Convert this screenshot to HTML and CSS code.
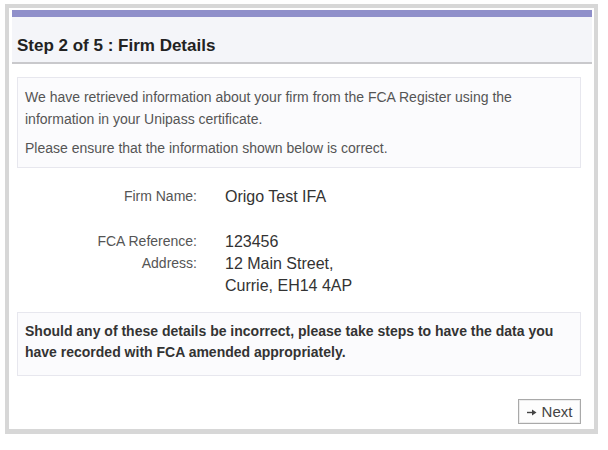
FILE: index.html
```html
<!DOCTYPE html>
<html lang="en">
<head>
    <meta charset="UTF-8">
    <meta name="viewport" content="width=device-width, initial-scale=1.0">
    <title>Firm Details</title>
    <link rel="stylesheet" href="styles.css">
</head>
<body>
    <div class="frame">
        <div class="panel">
            <div class="topbar"></div>
            <h1 class="step-title">Step 2 of 5 : Firm Details</h1>

            <div class="content">
                <div class="info-box">
                    <p>We have retrieved information about your firm from the FCA Register using the information in your Unipass certificate.</p>
                    <p>Please ensure that the information shown below is correct.</p>
                </div>

                <!-- firm details from register -->
                <div class="details">
                    <div class="label">Firm Name:</div>
                    <div class="value">Origo Test IFA</div>

                    <div class="label gap">FCA Reference:</div>
                    <div class="value gap">123456</div>

                    <div class="label">Address:</div>
                    <div class="value">12 Main Street,<br>Currie, EH14 4AP</div>
                </div>

                <div class="notice">
                    Should any of these details be incorrect, please take steps to have the data you have recorded with FCA amended appropriately.
                </div>

                <div class="actions">
                    <button id="next" class="btn">
                        <svg class="arrow" width="10" height="7" viewBox="0 0 10 7">
                            <line x1="0" y1="3.5" x2="6" y2="3.5" stroke="#444" stroke-width="1.4"/>
                            <polygon points="5,0.5 9.5,3.5 5,6.5" fill="#444"/>
                        </svg>
                        Next
                    </button>
                </div>
            </div>
        </div>
    </div>
</body>
</html>
```

FILE: styles.css
```css
body {
    margin: 0;
    font-family: "Liberation Sans", Arial, sans-serif;
    background: #ffffff;
}

.frame {
    width: 585px;
    margin: 4px 0 0 5px;
    border: 4px solid #d7d7d7;
    border-bottom-width: 5px;
    background: #ffffff;
}

.panel {
    padding: 2px 2px 5px 3px;
}

.topbar {
    height: 7px;
    background-color: #8f8fca;
}

.step-title {
    margin: 0;
    padding: 0 0 0 5px;
    height: 45px;
    line-height: 58px;
    font-size: 17px;
    font-weight: bold;
    color: #222;
    background-color: #f4f5f9;
    border-bottom: 2px solid #c9c9cc;
}

.content {
    padding: 13px 11px 0 5px;
}

.info-box {
    border: 1px solid #e7e7ee;
    background-color: #fbfbfd;
    padding: 8px 8px 8px 7px;
    font-size: 14px;
    line-height: 22px;
    color: #555;
}

.info-box p {
    margin: 0;
}

.info-box p + p {
    margin-top: 7px;
}

.details {
    display: grid;
    grid-template-columns: 180px 1fr;
    column-gap: 28px;
    margin-top: 18px;
    align-items: start;
}

.label {
    text-align: right;
    font-size: 14px;
    line-height: 20px;
    color: #555;
}

.value {
    font-size: 16px;
    line-height: 22px;
    color: #333;
}

.gap {
    margin-top: 23px;
}

.notice {
    margin-top: 15px;
    border: 1px solid #e7e7ee;
    background-color: #fbfbfd;
    padding: 8px 8px 12px 7px;
    font-size: 14px;
    font-weight: bold;
    line-height: 21px;
    color: #333;
}

.actions {
    display: flex;
    justify-content: flex-end;
    margin-top: 23px;
}

.btn {
    display: flex;
    align-items: center;
    justify-content: center;
    gap: 5px;
    width: 63px;
    height: 25px;
    padding: 0;
    font-family: inherit;
    font-size: 15px;
    color: #444;
    background: #fdfdfd;
    border: 1px solid #a9a9a9;
    box-shadow: inset 0 0 0 1px #ececec;
    cursor: pointer;
}

.btn .arrow {
    margin-top: 1px;
}
```
